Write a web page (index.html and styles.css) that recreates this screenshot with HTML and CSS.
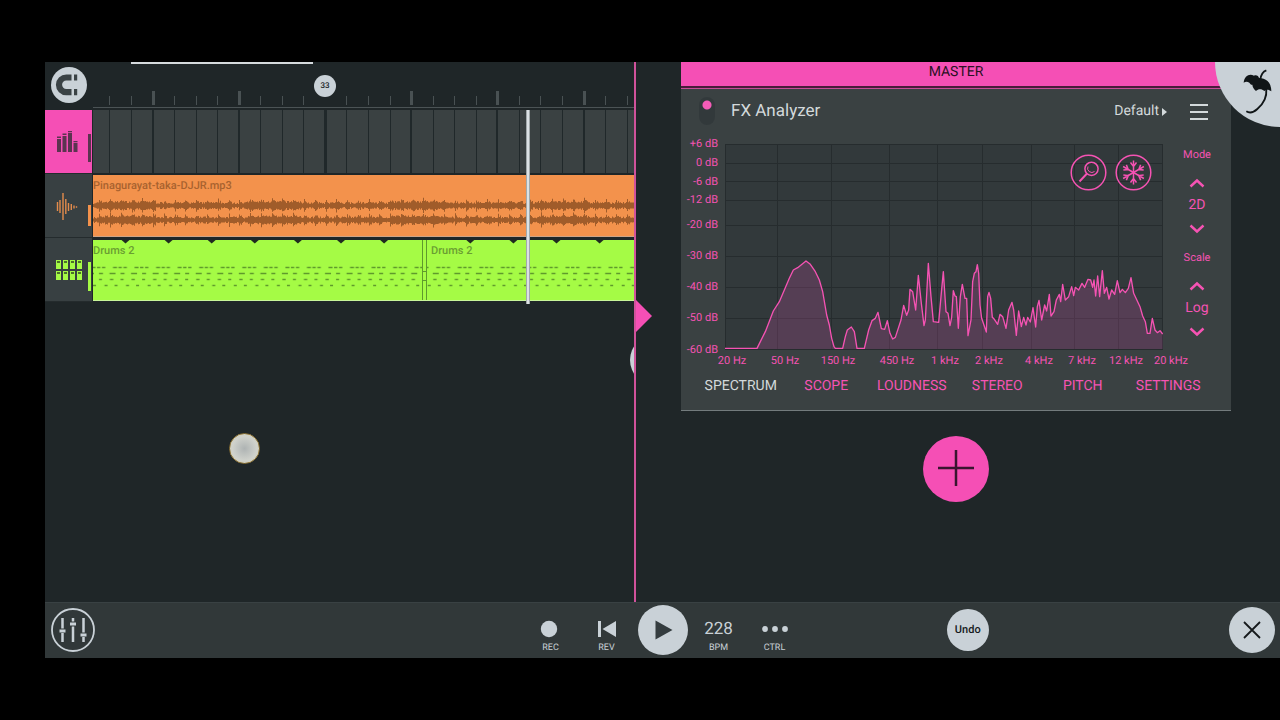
FILE: index.html
```html
<!DOCTYPE html>
<html lang="en">
<head>
<meta charset="utf-8">
<title>Master – FX Analyzer</title>
<link rel="stylesheet" href="styles.css">
</head>
<body>
<div class="app">
  <main class="workspace">
    <section class="playlist" aria-label="Playlist">
      <div class="ruler-row">
        <button class="snap" aria-label="Snap">
          <svg viewBox="0 0 36 36" width="36" height="36"><path d="M20.500 10.500H15.300A7.300 7.300 0 0 0 15.300 25.100H20.500" fill="none" stroke="#3a4245" stroke-width="6.200"/><path d="M23 7.400h3.200v6.200h-3.200zM23 22h3.200v6.200h-3.200z" fill="#3a4245"/></svg>
        </button>
        <div class="ruler">
          <svg class="fill" id="ruler"></svg>
          <span class="range"></span>
          <span class="marker">33</span>
        </div>
      </div>
      <div class="tracks">
        <div class="track">
          <button class="track-head master" aria-label="Master track">
            <svg width="22" height="24" viewBox="0 0 22 24"><path d="M1 9h4v13H1zM6.500 6h4v16h-4zM12 3h4v19h-4zM17.500 13h4v9h-4zM1 6.500h4v1.500H1zM6.500 3.500h4v1.500h-4zM12 1h4v1.200h-4zM17.500 11h4v1.200h-4z" fill="#5b3450"/></svg>
            <i class="meter"></i>
          </button>
          <div class="lane"><svg class="fill" id="grid"></svg></div>
        </div>
        <div class="track">
          <button class="track-head" aria-label="Audio track">
            <svg width="22" height="30" viewBox="0 0 22 30"><path d="M1.500 11v9M4 9v13M7 2v27M9.800 8v15M12.500 12v8M15.300 13v6M18 14.500v3M20.500 15.300v1.500" fill="none" stroke="#e38b4c" stroke-width="1.400"/></svg>
            <i class="meter audio"></i>
          </button>
          <div class="clip orange"><span class="clip-name">Pinagurayat-taka-DJJR.mp3</span><svg class="fill" id="wave"></svg></div>
        </div>
        <div class="track">
          <button class="track-head drum" aria-label="Drum track">
            <svg width="26" height="22" viewBox="0 0 26 22"><path d="M0 1h5v9H0zM7 1h5v9H7zM14 1h5v9h-5zM21 1h5v9h-5zM0 12h5v9H0zM7 12h5v9H7zM14 12h5v9h-5zM21 12h5v9h-5z" fill="#a5fb45"/><path d="M1 3h3M8 3h3M15 3h3M22 3h3M1 14h3M8 14h3M15 14h3M22 14h3" stroke="#31451f" stroke-width="1.500"/></svg>
            <i class="meter drums"></i>
          </button>
          <div class="clip green">
            <svg class="fill" id="notes">
              <defs>
                <pattern id="beat" width="21.550" height="62" patternUnits="userSpaceOnUse">
                  <path d="M0 27.500h2.500M4 27.500h3.300M9 27.500h3.300M20 27.500h1.550M6 33.500h4M16.500 33.500h5.050M0 33.500h1M6 39.500h3M17 39.500h3.300M0 45.500h3M11.500 45.500h3" stroke="#5f9a2c" stroke-width="1.500" fill="none"/>
                </pattern>
              </defs>
            </svg>
            <span class="clip-name">Drums 2</span>
            <span class="clip-name second">Drums 2</span>
          </div>
        </div>
        <span class="playhead"></span>
      </div>
      <span class="drawer-knob"></span>
      <span class="touch"></span>
    </section>

    <section class="rack" aria-label="Master effects">
      <button class="splitter" aria-label="Collapse effects"><svg width="16" height="32" viewBox="0 0 16 32"><path d="M0 0L16 16L0 32z" fill="#f54fb5"/></svg></button>
      <article class="device">
        <h1 class="rack-title">MASTER</h1>
        <header class="device-head">
          <input class="power" type="checkbox" checked aria-label="FX Analyzer on">
          <h2 class="device-name">FX Analyzer</h2>
          <button class="preset">Default<svg width="5" height="8" viewBox="0 0 5 8"><path d="M0 0L5 4L0 8z" fill="currentColor"/></svg></button>
          <button class="menu" aria-label="Menu"><svg width="20" height="18" viewBox="0 0 20 18"><path d="M1 2h18M1 9h18M1 16h18" stroke="currentColor" stroke-width="2"/></svg></button>
        </header>
        <div class="device-body">
          <div class="chart">
            <svg class="chart-svg" viewBox="0 0 482 232" role="img" aria-label="Frequency spectrum">
              <rect x="44" y="8" width="438" height="205" fill="#32393b"/>
              <path class="grid-line" d="M44 8.500H482M44 27.500H482M44 45.500H482M44 64.500H482M44 89.500H482M44 120.500H482M44 151.500H482M44 182.500H482M44 213.500H482M44.500 8V213M96.500 8V213M150.500 8V213M208.500 8V213M256.500 8V213M301.500 8V213M350.500 8V213M393.500 8V213M437.500 8V213M481.500 8V213"/>
              <g transform="translate(-5 94) scale(.33333)">
                <path class="area" d="M147 355L243 355L268 305L292 243L310 215L325 180L340 145L352 120L365 113L390 93L403 103L418 125L430 150L440 185L452 255L460 285L467 325L474 350L478 355L500 355L508 320L514 300L526 291L535 305L543 355L565 355L578 300L588 272L598 265L606 247L616 296L626 298L634 272L642 310L650 327L658 322L675 270L683 226L692 256L698 240L702 178L710 185L719 240L727 136L736 220L744 287L748 270L757 100L765 200L772 275L788 277L795 200L802 125L810 245L816 250L822 287L827 262L832 182L837 198L841 200L847 295L853 200L859 163L867 205L872 205L876 317L885 270L890 155L895 130L900 125L904 104L908 130L912 225L917 265L931 306L935 200L939 187L944 205L949 262L955 268L965 283L972 253L980 260L990 295L998 240L1008 217L1013 240L1021 316L1028 243L1036 290L1043 262L1050 285L1055 262L1063 276L1071 233L1079 291L1084 230L1089 211L1097 270L1106 225L1112 243L1120 193L1125 258L1134 245L1141 210L1150 193L1154 215L1160 163L1168 210L1178 200L1187 170L1193 197L1198 172L1208 180L1218 160L1226 172L1236 148L1244 150L1250 172L1254 150L1259 198L1265 138L1271 200L1279 122L1285 190L1292 172L1299 207L1307 180L1316 193L1324 152L1332 188L1339 178L1348 188L1357 175L1365 143L1373 190L1392 230L1400 258L1408 275L1414 310L1422 310L1429 265L1437 300L1444 308L1452 302L1460 312V357H147z"/>
                <path class="spectrum" d="M147 355L243 355L268 305L292 243L310 215L325 180L340 145L352 120L365 113L390 93L403 103L418 125L430 150L440 185L452 255L460 285L467 325L474 350L478 355L500 355L508 320L514 300L526 291L535 305L543 355L565 355L578 300L588 272L598 265L606 247L616 296L626 298L634 272L642 310L650 327L658 322L675 270L683 226L692 256L698 240L702 178L710 185L719 240L727 136L736 220L744 287L748 270L757 100L765 200L772 275L788 277L795 200L802 125L810 245L816 250L822 287L827 262L832 182L837 198L841 200L847 295L853 200L859 163L867 205L872 205L876 317L885 270L890 155L895 130L900 125L904 104L908 130L912 225L917 265L931 306L935 200L939 187L944 205L949 262L955 268L965 283L972 253L980 260L990 295L998 240L1008 217L1013 240L1021 316L1028 243L1036 290L1043 262L1050 285L1055 262L1063 276L1071 233L1079 291L1084 230L1089 211L1097 270L1106 225L1112 243L1120 193L1125 258L1134 245L1141 210L1150 193L1154 215L1160 163L1168 210L1178 200L1187 170L1193 197L1198 172L1208 180L1218 160L1226 172L1236 148L1244 150L1250 172L1254 150L1259 198L1265 138L1271 200L1279 122L1285 190L1292 172L1299 207L1307 180L1316 193L1324 152L1332 188L1339 178L1348 188L1357 175L1365 143L1373 190L1392 230L1400 258L1408 275L1414 310L1422 310L1429 265L1437 300L1444 308L1452 302L1460 312"/>
              </g>
              <g class="axis db">
                <text x="37" y="11">+6 dB</text><text x="37" y="30">0 dB</text><text x="37" y="49">-6 dB</text><text x="37" y="67">-12 dB</text><text x="37" y="92">-20 dB</text><text x="37" y="123">-30 dB</text><text x="37" y="154">-40 dB</text><text x="37" y="185">-50 dB</text><text x="37" y="217">-60 dB</text>
              </g>
              <g class="axis hz">
                <text x="51" y="228">20 Hz</text><text x="104" y="228">50 Hz</text><text x="157" y="228">150 Hz</text><text x="216" y="228">450 Hz</text><text x="264" y="228">1 kHz</text><text x="308" y="228">2 kHz</text><text x="358" y="228">4 kHz</text><text x="401" y="228">7 kHz</text><text x="445" y="228">12 kHz</text><text x="490" y="228">20 kHz</text>
              </g>
            </svg>
            <div class="chart-tools">
              <button class="tool" aria-label="Zoom"><svg width="37" height="37" viewBox="0 0 37 37"><circle cx="18.500" cy="18.500" r="17.300"/><circle cx="21.500" cy="14.800" r="6.600"/><path d="M18 12.500A4.200 4.200 0 0 0 24.500 17.500" stroke-width="1"/><path d="M17 19.500L9.500 27.500" stroke-width="2"/></svg></button>
              <button class="tool" aria-label="Freeze"><svg width="37" height="37" viewBox="0 0 37 37"><circle cx="18.500" cy="18.500" r="17.300"/><g id="arm"><path d="M18.500 18.500V6.500M15.500 8.500l3 4L21.500 8.500"/></g><use href="#arm" transform="rotate(60 18.500 18.500)"/><use href="#arm" transform="rotate(120 18.500 18.500)"/><use href="#arm" transform="rotate(180 18.500 18.500)"/><use href="#arm" transform="rotate(240 18.500 18.500)"/><use href="#arm" transform="rotate(300 18.500 18.500)"/></svg></button>
            </div>
          </div>
          <div class="side">
            <div class="stepper">
              <span class="stepper-label">Mode</span>
              <button aria-label="Previous mode"><svg width="16" height="10" viewBox="0 0 16 10"><path d="M1.500 8.500L8 2.500L14.500 8.500"/></svg></button>
              <output>2D</output>
              <button aria-label="Next mode"><svg width="16" height="10" viewBox="0 0 16 10"><path d="M1.500 1.500L8 7.500L14.500 1.500"/></svg></button>
            </div>
            <div class="stepper">
              <span class="stepper-label">Scale</span>
              <button aria-label="Previous scale"><svg width="16" height="10" viewBox="0 0 16 10"><path d="M1.500 8.500L8 2.500L14.500 8.500"/></svg></button>
              <output>Log</output>
              <button aria-label="Next scale"><svg width="16" height="10" viewBox="0 0 16 10"><path d="M1.500 1.500L8 7.500L14.500 1.500"/></svg></button>
            </div>
          </div>
        </div>
        <nav class="tabs">
          <button class="active">SPECTRUM</button><button>SCOPE</button><button>LOUDNESS</button><button>STEREO</button><button>PITCH</button><button>SETTINGS</button>
        </nav>
      </article>
      <button class="add" aria-label="Add effect"><svg width="38" height="38" viewBox="0 0 38 38"><path d="M19 0v36M1 18h36" stroke="#39152f" stroke-width="2.500"/></svg></button>
      <button class="logo" aria-label="Main menu">
        <svg width="65" height="65" viewBox="735 18 195 195"><path d="M821 80C823 60 838 51 852 59C860 56 866 61 867 66C886 67 904 76 904 106C897 101 889 99 883 105C875 98 865 98 858 105C852 100 848 94 847 86C844 88 841 84 838 80C832 76 826 77 821 80z" fill="#101517"/><path d="M889 43C878 47 873 57 871 70M889 98C891 122 879 145 862 159C850 170 837 171 829 166" fill="none" stroke="#101517" stroke-width="5.500"/></svg>
      </button>
    </section>
  </main>

  <footer class="transport">
    <button class="mixer" aria-label="Mixer"><svg width="44" height="44" viewBox="0 0 44 44"><circle cx="22" cy="22" r="21" fill="none" stroke="#c9d1d7" stroke-width="1.800"/><path d="M11.500 10v10.500M11.500 25v9M22 10v3.500M22 18.500v15.500M32.500 10v14.500M32.500 29v5" stroke="#c9d1d7" stroke-width="2.500"/><path d="M8.500 21.500h6v3h-6zM19 14.500h6v3h-6zM29.500 25.500h6v3h-6z" fill="#c9d1d7"/></svg></button>
    <div class="controls">
      <button class="control"><svg width="28" height="28" viewBox="0 0 28 28"><circle cx="12" cy="14" r="8.200" fill="#c9d1d7"/></svg><span>REC</span></button>
      <button class="control"><svg width="28" height="28" viewBox="0 0 28 28"><path d="M5 6h3v16H5zM23 6v16L9.500 14z" fill="#c9d1d7"/></svg><span>REV</span></button>
      <button class="play" aria-label="Play"><svg width="50" height="50" viewBox="0 0 50 50"><path d="M17.500 15.500L34.500 25L17.500 34.500z" fill="#343c3f"/></svg></button>
      <button class="control"><b>228</b><span>BPM</span></button>
      <button class="control"><svg width="28" height="28" viewBox="0 0 28 28"><circle cx="4" cy="14" r="2.900" fill="#c9d1d7"/><circle cx="14" cy="14" r="2.900" fill="#c9d1d7"/><circle cx="24" cy="14" r="2.900" fill="#c9d1d7"/></svg><span>CTRL</span></button>
    </div>
    <div class="actions">
      <button class="undo">Undo</button>
      <button class="close" aria-label="Close"><svg width="18" height="18" viewBox="0 0 18 18"><path d="M1 1L17 17M17 1L1 17" stroke="#15191b" stroke-width="1.800"/></svg></button>
    </div>
  </footer>
</div>
<script src="app.js"></script>
</body>
</html>
```

FILE: styles.css
```css
* { box-sizing: border-box; }
body {
  margin: 0;
  background: #000;
  color: #c9d1d7;
  font-family: Roboto, "Liberation Sans", sans-serif;
  text-rendering: geometricPrecision;
}
button {
  display: flex;
  align-items: center;
  justify-content: center;
  margin: 0;
  padding: 0;
  border: 0;
  background: none;
  color: inherit;
  font: inherit;
  text-rendering: inherit;
  cursor: pointer;
}
h1, h2 { margin: 0; font-weight: 400; }
svg { display: block; flex: none; }

.app {
  display: flex;
  flex-direction: column;
  min-height: 100vh;
  padding: 62px 0 62px 45px;
}
.workspace {
  flex: 1;
  display: grid;
  grid-template-columns: 589fr 646fr;
  background: #1f2628;
}

/* Playlist */
.playlist {
  position: relative;
  overflow: hidden;
  min-width: 0;
}
.ruler-row, .track {
  display: grid;
  grid-template-columns: 47px 1fr;
  column-gap: 1px;
}
.ruler-row { height: 48px; }
.snap {
  width: 36px;
  height: 36px;
  margin: 5px 0 0 6px;
  border-radius: 50%;
  background: #c9d1d7;
}
.ruler { position: relative; }
.fill { width: 100%; height: 100%; }
.range {
  position: absolute;
  top: 0;
  left: 38px;
  width: 182px;
  height: 2px;
  background: #d5dadd;
}
.marker {
  position: absolute;
  top: 13px;
  left: 221px;
  width: 22px;
  height: 22px;
  border-radius: 50%;
  background: #c9d1d7;
  color: #15191b;
  font-size: 8px;
  font-weight: 500;
  line-height: 22px;
  text-align: center;
}
.tracks { position: relative; }
.track { height: 64px; }
.track-head {
  position: relative;
  padding-right: 4px;
  border-bottom: 1px solid #242b2d;
  background: #384042;
}
.track-head.drum { padding-right: 0; }
.track-head.master { background: #f54fb5; }
.meter {
  position: absolute;
  right: 1px;
  top: 24px;
  width: 3px;
  height: 28px;
  background: #5b3450;
}
.meter.audio { top: 31px; height: 21px; background: #f3924c; }
.meter.drums { top: 24px; height: 29px; background: #a5fb45; }
.lane { height: 63px; background: #3a4142; }
.clip {
  position: relative;
  height: 62px;
  margin-top: 1px;
}
.clip.orange { background: #f3924c; border-bottom: 1px solid #cfa487; }
.clip.green { margin-top: 2px; height: 61px; background: #a5fb45; border-bottom: 1px solid #c8f59a; }
.clip-name {
  position: absolute;
  top: 4px;
  left: 0;
  font-size: 11px;
  font-weight: 500;
  line-height: 14px;
  white-space: nowrap;
}
.orange .clip-name { color: #a8622f; }
.green .clip-name { color: #6a9e32; }
.clip-name.second { left: 338px; }
.playhead {
  position: absolute;
  top: 0;
  left: 481px;
  width: 4px;
  height: 194px;
  border: solid #a2a9ab;
  border-width: 0 1px;
  background: #dce2e5;
}
.drawer-knob {
  position: absolute;
  right: -46px;
  top: 273px;
  width: 50px;
  height: 50px;
  border-radius: 50%;
  background: #c9d1d7;
}
.touch {
  position: absolute;
  left: 184px;
  top: 371px;
  width: 31px;
  height: 31px;
  border: 1px solid #8d7336;
  border-radius: 50%;
  background: radial-gradient(#aeb3b3, #d0d2cc 60%, #cfc79a);
}

/* Effect rack */
.rack {
  position: relative;
  padding: 0 49px 0 45px;
  border-left: 2px solid #d0529b;
}
.splitter {
  position: absolute;
  left: 0;
  top: 238px;
}
.device {
  border-bottom: 1px solid #737b7d;
  background: #3a4142;
}
.rack-title {
  height: 27px;
  border-bottom: 1px solid #c44c96;
  background: linear-gradient(#f54fb5 24px, #4a1c3b 24px);
  color: #2a1023;
  font-size: 14px;
  line-height: 20px;
  text-align: center;
}
.device-head {
  display: flex;
  align-items: center;
  height: 47px;
  padding: 0 22px 4px 18px;
}
.power {
  appearance: none;
  width: 16px;
  height: 28px;
  margin: 0 16px 0 0;
  border-radius: 8px;
  background: radial-gradient(circle at 8px 8px, #f55cb8 3px, #f55cb8 4px, #32393b 5px);
}
.device-name { font-size: 17px; line-height: 24px; color: #d3d9db; }
.preset {
  gap: 3px;
  margin-left: auto;
  color: #d3d9db;
  font-size: 14px;
}
.preset svg { margin-top: 3px; }
.menu { margin: 2px 0 0 22px; color: #d3d9db; }
.device-body {
  display: grid;
  grid-template-columns: 1fr 68px;
}
.chart { position: relative; }
.chart-svg { width: 100%; overflow: visible; }
.grid-line { fill: none; stroke: #262c2e; }
.area { fill: rgba(190, 80, 160, .25); }
.spectrum {
  fill: none;
  stroke: #f553b3;
  stroke-width: 4;
  stroke-linejoin: round;
}
.axis { fill: #f553b3; font-size: 11px; }
.db { text-anchor: end; }
.hz { text-anchor: middle; }
.chart-tools {
  position: absolute;
  top: 18px;
  right: 11px;
  display: flex;
  gap: 8px;
}
.tool svg { fill: none; stroke: #f553b3; stroke-width: 1.5; }
.side {
  display: flex;
  flex-direction: column;
  gap: 3px;
  padding-top: 9px;
  color: #f553b3;
}
.stepper {
  display: flex;
  flex-direction: column;
  align-items: center;
  height: 100px;
}
.stepper-label { font-size: 11px; line-height: 20px; }
.stepper button { width: 32px; height: 20px; margin-top: 8px; }
.stepper output + button { margin-top: 4px; }
.stepper output { font-size: 14px; line-height: 20px; margin-top: 2px; }
.stepper svg { fill: none; stroke: currentColor; stroke-width: 2.4; }
.tabs {
  display: grid;
  grid-template-columns: repeat(6, 1fr);
  padding: 7px 20px 12px 17px;
  color: #f553b3;
  font-size: 14px;
  line-height: 23px;
}
.tabs .active { color: #d3d9db; }
.add {
  width: 66px;
  height: 66px;
  margin: 25px auto 0;
  border-radius: 50%;
  background: #f54fb5;
}
.logo {
  position: absolute;
  top: 0;
  right: 0;
  width: 65px;
  height: 65px;
  border-bottom-left-radius: 100%;
  background: #c9d1d7;
}

/* Transport */
.transport {
  display: grid;
  grid-template-columns: 1fr auto 1fr;
  align-items: center;
  height: 56px;
  padding-bottom: 2px;
  border-top: 1px solid #394143;
  background: #313839;
}
.mixer { width: 44px; margin-left: 6px; }
.controls {
  display: grid;
  grid-template-columns: repeat(5, 56px);
  justify-items: center;
  align-items: center;
}
.control { flex-direction: column; padding-top: 9px; }
.control b {
  font-size: 17px;
  font-weight: 400;
  line-height: 28px;
}
.control span { font-size: 9px; line-height: 10px; }
.play {
  width: 50px;
  height: 50px;
  border-radius: 50%;
  background: #c9d1d7;
}
.actions {
  display: flex;
  align-items: center;
  justify-content: space-between;
  padding: 0 5px 0 30%;
}
.undo, .close { border-radius: 50%; background: #c9d1d7; color: #15191b; }
.undo { width: 42px; height: 42px; margin-left: 1px; font-size: 11px; font-weight: 500; }
.close { width: 46px; height: 46px; }
```

FILE: app.js
```js
const NS = 'http://www.w3.org/2000/svg';
const STEP = 21.55;
const BAR_START = 59.5;
const MARKER_BEAT = 8;

function add(id, tag, attrs) {
  const el = document.createElementNS(NS, tag);
  for (const key in attrs) el.setAttribute(key, attrs[key]);
  document.getElementById(id).appendChild(el);
}

/* Beat lines of the ruler and of the master lane */
for (let i = -2; i < 70; i++) {
  const x = Math.round(BAR_START + i * STEP);
  const bar = i % 4 === 0;
  if (i !== MARKER_BEAT) {
    add('ruler', 'rect', { x: bar ? x - 1 : x, y: bar ? 29 : 34, width: bar ? 3 : 1, height: bar ? 14 : 9, fill: '#495153' });
  }
  add('grid', 'rect', { x: bar ? x - 1 : x, y: 0, width: i === MARKER_BEAT ? 3 : bar ? 2 : 1, height: 64, fill: '#20282a' });
}
add('ruler', 'rect', { x: 0, y: 45, width: '100%', height: 1, fill: '#4b5355' });

/* Stereo waveform with a peak on every half beat */
let seed = 7;
function random() {
  seed = (seed * 16807) % 2147483647;
  return seed / 2147483647;
}
for (const center of [30.500, 45]) {
  let d = '';
  for (let x = 0; x < 1500; x++) {
    const phase = (x + 5) % (STEP / 2);
    const peak = phase < 1 ? 3.5 : phase < 3 ? 1.5 : 0;
    const body = 1.600 + random() * 2 + (Math.sin(x / 23) > 0.4 ? 1 : 0);
    const up = body + peak * (0.5 + random() / 2);
    const down = body + peak * (0.5 + random() / 2);
    d += `M${x} ${(center - up).toFixed(1)}h1V${(center + down).toFixed(1)}h-1z`;
  }
  add('wave', 'path', { d, fill: '#a05c2a' });
}

/* Drum notes, pattern seams and repeat notches */
add('notes', 'rect', { x: 0, y: 0, width: 329, height: 61, fill: 'url(#beat)' });
add('notes', 'rect', { x: 334, y: 0, width: '100%', height: 61, fill: 'url(#beat)' });
add('notes', 'path', { d: 'M329.500 0V61M333.500 0V61M330 31.500h4M330 40.500h4', stroke: '#5f9a2c', fill: 'none' });
for (let i = 0; i < 35; i++) {
  if (i === 7) continue;
  const x = 32.5 + i * STEP * 2;
  add('notes', 'path', { d: `M${x - 4} 0h8l-4 3.500z`, fill: '#1f2a20' });
}
```
